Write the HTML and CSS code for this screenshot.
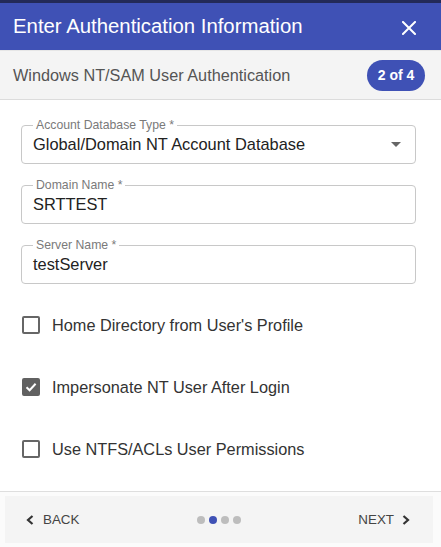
FILE: index.html
```html
<!DOCTYPE html>
<html>
<head>
<meta charset="utf-8">
<link rel="stylesheet" href="styles.css">
</head>
<body>
<div class="dialog">
  <div class="topstrip"></div>
  <div class="header">
    <span class="title">Enter Authentication Information</span>
    <svg class="close" width="14" height="14" viewBox="0 0 14 14"><path d="M1 1 L13 13 M13 1 L1 13" stroke="#fff" stroke-width="2" stroke-linecap="square"/></svg>
  </div>
  <div class="subheader">
    <span class="subtitle">Windows NT/SAM User Authentication</span>
    <span class="badge">2 of 4</span>
  </div>
  <div class="content">
    <fieldset class="field">
      <legend>Account Database Type *</legend>
      <div class="value select">
        <span>Global/Domain NT Account Database</span>
        <svg class="caret" width="10" height="5" viewBox="0 0 10 5"><path d="M0 0 L10 0 L5 5 Z" fill="#666"/></svg>
      </div>
    </fieldset>
    <fieldset class="field">
      <legend>Domain Name *</legend>
      <div class="value">SRTTEST</div>
    </fieldset>
    <fieldset class="field">
      <legend>Server Name *</legend>
      <div class="value">testServer</div>
    </fieldset>
    <div class="checks">
      <div class="check"><span class="box"></span><span class="label">Home Directory from User's Profile</span></div>
      <div class="check"><span class="box checked"><svg width="14" height="14" viewBox="0 0 14 14"><path d="M2.5 7.2 L5.6 10.2 L11.6 3.8" stroke="#fff" stroke-width="2" fill="none"/></svg></span><span class="label">Impersonate NT User After Login</span></div>
      <div class="check"><span class="box"></span><span class="label">Use NTFS/ACLs User Permissions</span></div>
    </div>
  </div>
  <div class="footer">
    <div class="footer-inner">
      <div class="nav back">
        <svg width="8" height="10" viewBox="0 0 8 10"><path d="M6.5 1 L2 5 L6.5 9" stroke="#333" stroke-width="2.2" fill="none"/></svg>
        <span>BACK</span>
      </div>
      <div class="dots"><span class="dot"></span><span class="dot active"></span><span class="dot"></span><span class="dot"></span></div>
      <div class="nav next">
        <span>NEXT</span>
        <svg width="8" height="10" viewBox="0 0 8 10"><path d="M1.5 1 L6 5 L1.5 9" stroke="#333" stroke-width="2.2" fill="none"/></svg>
      </div>
    </div>
  </div>
</div>
</body>
</html>
```
FILE: styles.css
```css
html, body {
  margin: 0;
  padding: 0;
  background: #fff;
}
body {
  font-family: "Liberation Sans", Arial, sans-serif;
}
.dialog {
  width: 441px;
  height: 547px;
  display: flex;
  flex-direction: column;
  overflow: hidden;
}
.topstrip {
  height: 3px;
  background: #232a58;
}
.header {
  height: 47px;
  background: #3f51b5;
  display: flex;
  align-items: center;
  justify-content: space-between;
  padding: 0 25px 0 13px;
}
.title {
  color: #fff;
  font-size: 20.35px;
}
.close {
  margin-top: 3px;
}
.subheader {
  height: 50px;
  background: #f4f4f4;
  border-top: 1px solid #e6e6e6;
  border-bottom: 1px solid #dcdcdc;
  display: flex;
  align-items: center;
  justify-content: space-between;
  padding: 0 16px 0 13px;
  box-sizing: border-box;
}
.subtitle {
  color: #555;
  font-size: 16.25px;
}
.badge {
  background: #3f51b5;
  color: #fff;
  font-weight: bold;
  font-size: 14px;
  width: 58px;
  height: 31px;
  border-radius: 16px;
  display: flex;
  align-items: center;
  justify-content: center;
}
.content {
  flex: 1;
  padding: 18px 25px 0 21px;
}
.field {
  margin: 0 0 14px 0;
  padding: 0 12px 0 11px;
  border: 1px solid #c8c8c8;
  border-radius: 4px;
  min-width: 0;
}
.field legend {
  font-size: 12.25px;
  line-height: 14px;
  color: #7a7a7a;
  padding: 0 3px;
}
.value {
  font-size: 16.4px;
  line-height: 20px;
  color: #222;
  padding: 2px 0 9px 0;
}
.select {
  display: flex;
  align-items: center;
  justify-content: space-between;
}
.caret {
  margin-right: 2px;
}
.checks {
  padding-top: 18px;
  display: flex;
  flex-direction: column;
  gap: 44px;
}
.check {
  display: flex;
  align-items: center;
  height: 18px;
}
.box {
  width: 14px;
  height: 14px;
  border: 2px solid #666;
  border-radius: 2px;
  margin: 0 12px 0 1px;
  display: flex;
  align-items: center;
  justify-content: center;
  flex: none;
}
.box.checked {
  background: #616161;
  border-color: #616161;
}
.label {
  font-size: 16.3px;
  color: #333;
}
.footer {
  height: 56px;
  border-top: 1px solid #dedede;
  background: #fbfbfb;
  padding: 4px 8px 4px 5px;
  box-sizing: border-box;
}
.footer-inner {
  height: 47px;
  background: #f4f4f4;
  display: flex;
  align-items: center;
  justify-content: space-between;
  padding: 0 23px 0 21px;
}
.nav {
  display: flex;
  align-items: center;
  gap: 9px;
  font-size: 13.4px;
  color: #444;
  width: 60px;
}
.next {
  justify-content: flex-end;
  gap: 8px;
}
.dots {
  display: flex;
  gap: 4px;
  margin-left: 2px;
}
.dot {
  width: 8px;
  height: 8px;
  border-radius: 50%;
  background: #bdbdbd;
}
.dot.active {
  background: #3f51b5;
}
```
